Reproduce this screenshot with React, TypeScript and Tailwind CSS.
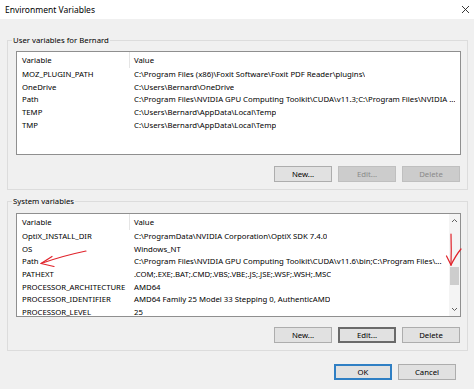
const userVars: [string, string][] = [
  ["MOZ_PLUGIN_PATH", "C:\\Program Files (x86)\\Foxit Software\\Foxit PDF Reader\\plugins\\"],
  ["OneDrive", "C:\\Users\\Bernard\\OneDrive"],
  ["Path", "C:\\Program Files\\NVIDIA GPU Computing Toolkit\\CUDA\\v11.3;C:\\Program Files\\NVIDIA ..."],
  ["TEMP", "C:\\Users\\Bernard\\AppData\\Local\\Temp"],
  ["TMP", "C:\\Users\\Bernard\\AppData\\Local\\Temp"],
];

const systemVars: [string, string][] = [
  ["OptiX_INSTALL_DIR", "C:\\ProgramData\\NVIDIA Corporation\\OptiX SDK 7.4.0"],
  ["OS", "Windows_NT"],
  ["Path", "C:\\Program Files\\NVIDIA GPU Computing Toolkit\\CUDA\\v11.6\\bin;C:\\Program Files\\..."],
  ["PATHEXT", ".COM;.EXE;.BAT;.CMD;.VBS;.VBE;.JS;.JSE;.WSF;.WSH;.MSC"],
  ["PROCESSOR_ARCHITECTURE", "AMD64"],
  ["PROCESSOR_IDENTIFIER", "AMD64 Family 25 Model 33 Stepping 0, AuthenticAMD"],
  ["PROCESSOR_LEVEL", "25"],
];

const Button = ({
  label,
  disabled,
  variant,
}: {
  label: string;
  disabled?: boolean;
  variant?: "focus" | "default";
}) => {
  let cls = "border border-[#adadad] bg-[#e1e1e1] text-black";
  if (disabled) cls = "border border-[#bfbfbf] bg-[#cccccc] text-[#8a8a8a]";
  if (variant === "focus") cls = "border-2 border-[#6a6a6a] bg-[#e1e1e1] text-black";
  if (variant === "default") cls = "border-2 border-[#2f7fc4] bg-[#e1e1e1] text-black";
  return (
    <div className={`w-[58px] h-[16px] flex items-center justify-center ${cls}`}>
      {label}
    </div>
  );
};

const VarList = ({ rows, scrollbar }: { rows: [string, string][]; scrollbar?: boolean }) => (
  <div className="h-[104px] border border-[#8f8f8f] bg-white flex overflow-hidden">
    <div className="flex-1 overflow-hidden">
      <div className="h-[16px] flex items-center">
        <div className="w-[113px] pl-[5px] border-r border-[#e5e5e5] h-full flex items-center">Variable</div>
        <div className="pl-[4px]">Value</div>
      </div>
      {rows.map(([name, value]) => (
        <div key={name + value} className="h-[12.7px] flex items-center whitespace-nowrap">
          <div className="w-[113px] shrink-0 pl-[5px]">{name}</div>
          <div className="pl-[4px] overflow-hidden">{value}</div>
        </div>
      ))}
    </div>
    {scrollbar && (
      <div className="w-[11px] bg-[#f4f4f4] flex flex-col items-center">
        <svg width="7" height="13" viewBox="0 0 7 13" className="shrink-0">
          <path d="M1 8 L3.5 5.5 L6 8" fill="none" stroke="#606060" strokeWidth="1" />
        </svg>
        <div className="mt-[40px] w-[9px] h-[18px] bg-[#cdcdcd]" />
        <div className="flex-1" />
        <svg width="7" height="13" viewBox="0 0 7 13" className="shrink-0">
          <path d="M1 5 L3.5 7.5 L6 5" fill="none" stroke="#606060" strokeWidth="1" />
        </svg>
      </div>
    )}
  </div>
);

const App = () => {
  return (
    <div className="relative w-[474px] h-[389px] bg-[#f0f0f0] text-black text-[7.75px] leading-[11px] font-['Noto_Sans','Segoe_UI',sans-serif] overflow-hidden">
      {/* title bar */}
      <div className="h-[19px] bg-white flex items-center justify-between pl-[5px] pr-[4px]">
        <span className="text-[8.5px]">Environment Variables</span>
        <svg width="9" height="9" viewBox="0 0 9 9">
          <path d="M1 1 L8 8 M8 1 L1 8" stroke="#222" strokeWidth="0.9" />
        </svg>
      </div>

      {/* user variables */}
      <fieldset className="mt-[15.5px] ml-[7px] w-[461px] border border-[#dcdcdc] pl-[8px] pr-[6px] pb-[7px]">
        <legend className="ml-[-4px] px-[1px]">User variables for Bernard</legend>
        <div className="mt-[5.5px]">
          <VarList rows={userVars} />
        </div>
        <div className="mt-[11px] flex justify-end gap-[6px] pr-[1px]">
          <Button label="New..." />
          <Button label="Edit..." disabled />
          <Button label="Delete" disabled />
        </div>
      </fieldset>

      {/* system variables */}
      <fieldset className="mt-[5.5px] ml-[7px] w-[461px] border border-[#dcdcdc] pl-[8px] pr-[6px] pb-[7px]">
        <legend className="ml-[-4px] px-[1px]">System variables</legend>
        <div className="mt-[6.5px]">
          <VarList rows={systemVars} scrollbar />
        </div>
        <div className="mt-[10px] flex justify-end gap-[6px] pr-[1px]">
          <Button label="New..." />
          <Button label="Edit..." variant="focus" />
          <Button label="Delete" />
        </div>
      </fieldset>

      <div className="mt-[13px] flex justify-end gap-[6px] pr-[18px]">
        <Button label="OK" variant="default" />
        <Button label="Cancel" />
      </div>

      {/* red annotations */}
      <svg
        className="absolute left-0 top-0 pointer-events-none"
        width="474"
        height="389"
        viewBox="0 0 474 389"
      >
        <g fill="none" stroke="#e0232b" strokeWidth="1.2" strokeLinecap="round" strokeLinejoin="round">
          <path d="M86 251 Q62 256 41 263.5" />
          <path d="M52 256.5 L41 263.5 L54 266.5" />
          <path d="M451 234 Q451.5 250 451 265" />
          <path d="M446.5 256 L451 265" />
          <path d="M461 249 Q456 255 451 265" />
        </g>
      </svg>
    </div>
  );
};

export default App;
